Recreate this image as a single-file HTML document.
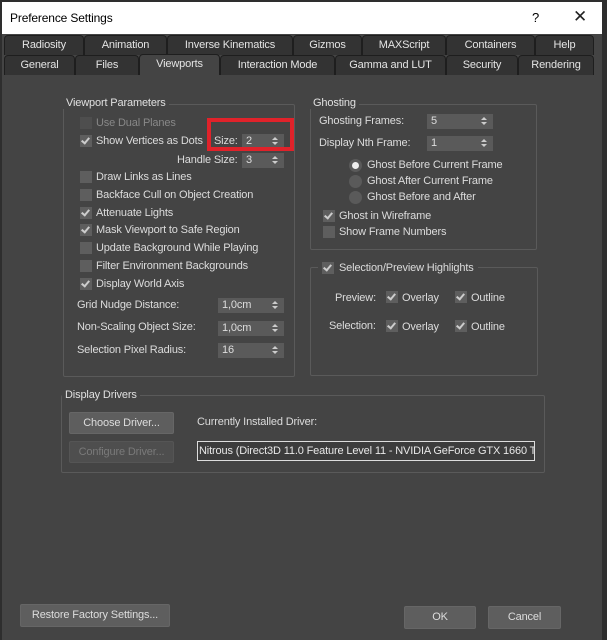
<!DOCTYPE html>
<html><head><style>
*{box-sizing:border-box;margin:0;padding:0}
body{width:607px;height:640px;background:#2e2e2e;position:relative;overflow:hidden;font-family:"Liberation Sans",Tahoma,sans-serif;font-size:11px;letter-spacing:-0.15px;color:#dcdcdc}
.a{position:absolute;white-space:nowrap}
#win{position:absolute;left:2px;top:2px;width:600px;height:638px;background:#444}
#title{position:absolute;left:2px;top:2px;width:600px;height:32px;background:#fff;color:#000}
.tab{position:absolute;height:20px;background:#333;border:1px solid #1e1e1e;border-bottom:none;border-radius:4px 4px 0 0;text-align:center;line-height:18px;color:#e4e4e4}
.sel{background:#444;height:21px}
.grp{position:absolute;border:1px solid #5a5a5a;border-radius:2px}
.leg{position:absolute;background:#444;padding:0 3px;color:#e0e0e0}
.cb{position:absolute;width:12px;height:12px;background:#5e5e5e}
.cb.on::after{content:"";position:absolute;left:3px;top:1px;width:3px;height:6px;border:solid #ccc;border-width:0 2px 2px 0;transform:rotate(40deg)}
.cb.dis{background:#4e4e4e}
.sp{position:absolute;height:15px;background:#5a5a5a;color:#ddd;padding-left:4px;line-height:15px}
.sp::after{content:"";position:absolute;right:6px;top:3px;border:3px solid transparent;border-bottom:3px solid #ccc;border-top:none}
.sp::before{content:"";position:absolute;right:6px;top:8px;border:3px solid transparent;border-top:3px solid #ccc;border-bottom:none}
.rd{position:absolute;width:13px;height:13px;border-radius:50%;background:#5a5a5a}
.btn{position:absolute;background:#5e5e5e;border:1px solid #666;border-radius:2px;text-align:center;color:#ddd}
</style></head><body>
<div id="win"></div>
<div id="title"><span class="a" style="left:8px;top:9px;font-size:12px">Preference Settings</span><span class="a" style="left:530px;top:8px;font-size:13px">?</span><span class="a" style="left:571px;top:5px;font-size:17px;font-weight:300;color:#222">✕</span></div>
<div class="tab" style="left:4px;top:35px;width:80px">Radiosity</div>
<div class="tab" style="left:84px;top:35px;width:83px">Animation</div>
<div class="tab" style="left:167px;top:35px;width:126px">Inverse Kinematics</div>
<div class="tab" style="left:293px;top:35px;width:69px">Gizmos</div>
<div class="tab" style="left:362px;top:35px;width:84px">MAXScript</div>
<div class="tab" style="left:446px;top:35px;width:89px">Containers</div>
<div class="tab" style="left:535px;top:35px;width:59px">Help</div>
<div class="tab" style="left:4px;top:55px;width:71px">General</div>
<div class="tab" style="left:75px;top:55px;width:64px">Files</div>
<div class="tab sel" style="left:139px;top:54px;width:81px">Viewports</div>
<div class="tab" style="left:220px;top:55px;width:115px">Interaction Mode</div>
<div class="tab" style="left:335px;top:55px;width:111px">Gamma and LUT</div>
<div class="tab" style="left:446px;top:55px;width:72px">Security</div>
<div class="tab" style="left:518px;top:55px;width:76px">Rendering</div>

<div class="grp" style="left:63px;top:104px;width:232px;height:273px"></div>
<span class="leg a" style="left:63px;top:97px">Viewport Parameters</span>
<div class="cb dis" style="left:80px;top:117px"></div><span class="a" style="left:96px;top:117px;color:#888">Use Dual Planes</span>
<div class="cb on" style="left:80px;top:135px"></div><span class="a" style="left:96px;top:135px">Show Vertices as Dots</span>
<span class="a" style="left:214px;top:135px">Size:</span><div class="sp" style="left:242px;top:134px;width:42px">2</div>
<div class="a" style="left:207px;top:118px;width:87px;height:33px;border:4px solid #e0222a"></div>
<span class="a" style="left:177px;top:154px">Handle Size:</span><div class="sp" style="left:242px;top:153px;width:42px">3</div>
<div class="cb" style="left:80px;top:171px"></div><span class="a" style="left:96px;top:171px">Draw Links as Lines</span>
<div class="cb" style="left:80px;top:189px"></div><span class="a" style="left:96px;top:189px">Backface Cull on Object Creation</span>
<div class="cb on" style="left:80px;top:207px"></div><span class="a" style="left:96px;top:207px">Attenuate Lights</span>
<div class="cb on" style="left:80px;top:224px"></div><span class="a" style="left:96px;top:224px">Mask Viewport to Safe Region</span>
<div class="cb" style="left:80px;top:242px"></div><span class="a" style="left:96px;top:242px">Update Background While Playing</span>
<div class="cb" style="left:80px;top:260px"></div><span class="a" style="left:96px;top:260px">Filter Environment Backgrounds</span>
<div class="cb on" style="left:80px;top:278px"></div><span class="a" style="left:96px;top:278px">Display World Axis</span>
<span class="a" style="left:77px;top:299px">Grid Nudge Distance:</span><div class="sp" style="left:218px;top:298px;width:66px">1,0cm</div>
<span class="a" style="left:77px;top:321px">Non-Scaling Object Size:</span><div class="sp" style="left:218px;top:321px;width:66px">1,0cm</div>
<span class="a" style="left:77px;top:344px">Selection Pixel Radius:</span><div class="sp" style="left:218px;top:343px;width:66px">16</div>

<div class="grp" style="left:310px;top:104px;width:227px;height:146px"></div>
<span class="leg a" style="left:310px;top:97px">Ghosting</span>
<span class="a" style="left:319px;top:115px">Ghosting Frames:</span><div class="sp" style="left:427px;top:114px;width:66px">5</div>
<span class="a" style="left:319px;top:137px">Display Nth Frame:</span><div class="sp" style="left:427px;top:136px;width:66px">1</div>
<div class="rd" style="left:349px;top:159px"><div style="position:absolute;left:3px;top:3px;width:7px;height:7px;border-radius:50%;background:#eee"></div></div><span class="a" style="left:367px;top:159px">Ghost Before Current Frame</span>
<div class="rd" style="left:349px;top:175px"></div><span class="a" style="left:367px;top:175px">Ghost After Current Frame</span>
<div class="rd" style="left:349px;top:191px"></div><span class="a" style="left:367px;top:191px">Ghost Before and After</span>
<div class="cb on" style="left:323px;top:210px"></div><span class="a" style="left:339px;top:210px">Ghost in Wireframe</span>
<div class="cb" style="left:323px;top:226px"></div><span class="a" style="left:339px;top:226px">Show Frame Numbers</span>

<div class="grp" style="left:310px;top:267px;width:228px;height:109px"></div>
<div class="a" style="left:318px;top:260px;width:160px;height:14px;background:#444"></div>
<div class="cb on" style="left:322px;top:262px"></div>
<span class="a" style="left:339px;top:262px">Selection/Preview Highlights</span>
<span class="a" style="left:335px;top:292px">Preview:</span>
<div class="cb on" style="left:386px;top:291px"></div><span class="a" style="left:402px;top:292px">Overlay</span>
<div class="cb on" style="left:455px;top:291px"></div><span class="a" style="left:471px;top:292px">Outline</span>
<span class="a" style="left:329px;top:320px">Selection:</span>
<div class="cb on" style="left:386px;top:320px"></div><span class="a" style="left:402px;top:321px">Overlay</span>
<div class="cb on" style="left:455px;top:320px"></div><span class="a" style="left:471px;top:321px">Outline</span>

<div class="grp" style="left:61px;top:395px;width:484px;height:78px"></div>
<span class="leg a" style="left:62px;top:389px">Display Drivers</span>
<div class="btn" style="left:69px;top:412px;width:105px;height:22px;line-height:20px">Choose Driver...</div>
<div class="btn" style="left:69px;top:441px;width:105px;height:22px;line-height:20px;background:#4e4e4e;border-color:#555;color:#7a7a7a">Configure Driver...</div>
<span class="a" style="left:197px;top:416px">Currently Installed Driver:</span>
<div class="a" style="left:197px;top:441px;width:338px;height:20px;border:1px solid #ddd;background:#3c3c3c;color:#e8e8e8;line-height:18px;padding-left:1px;overflow:hidden">Nitrous (Direct3D 11.0 Feature Level 11 - NVIDIA GeForce GTX 1660 T</div>

<div class="btn" style="left:20px;top:604px;width:150px;height:23px;line-height:21px">Restore Factory Settings...</div>
<div class="btn" style="left:404px;top:606px;width:72px;height:23px;line-height:21px">OK</div>
<div class="btn" style="left:488px;top:606px;width:73px;height:23px;line-height:21px">Cancel</div>
</body></html>
